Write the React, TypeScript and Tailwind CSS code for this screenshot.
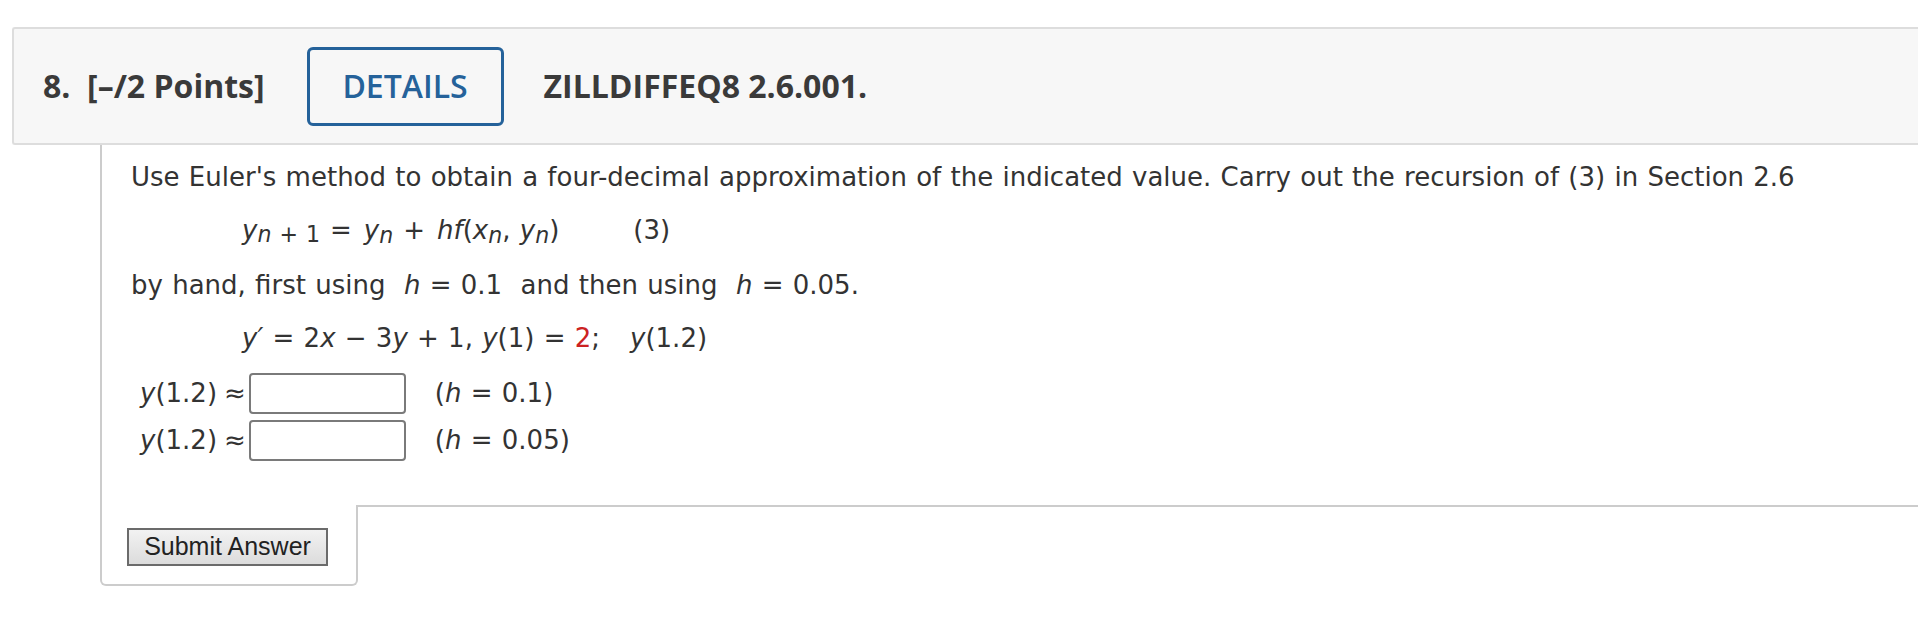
import React from 'react';

const body = { fontFamily: '"DejaVu Sans", Verdana, sans-serif' };
const head = { fontFamily: '"Open Sans", sans-serif' };

const I = ({ children }: { children: React.ReactNode }) => <i className="italic">{children}</i>;
const Sub = ({ children }: { children: React.ReactNode }) => (
  <sub className="text-[0.85em] relative top-[0.2em] align-baseline">{children}</sub>
);

const AnswerRow = ({ step }: { step: string }) => (
  <div className="flex items-center h-[41px]">
    <span className="pl-[9px] whitespace-nowrap">
      <I>y</I>(1.2)<span className="ml-[7px]">≈</span>
    </span>
    <input
      type="text"
      className="ml-[3px] w-[157px] h-[41px] border-2 border-[#7a7a7a] rounded-[4px] bg-white outline-none"
    />
    <span className="ml-[29px] whitespace-nowrap">
      (<I>h</I> = {step})
    </span>
  </div>
);

export default function App() {
  return (
    <div className="w-[1918px] h-[622px] bg-white overflow-hidden pt-[27px] text-[#333333]">
      {/* question header */}
      <div
        className="ml-[12px] h-[118px] border-2 border-r-0 border-[#dddddd] rounded-l-[3px] bg-[#f7f7f7] flex items-center pl-[29px]"
        style={head}
      >
        <span className="text-[32px] font-bold text-[#3a3a3a] whitespace-nowrap">8.&nbsp; [–/2 Points]</span>
        <button className="ml-[42px] w-[197px] h-[79px] border-[3px] border-[#25629a] rounded-[6px] text-[32px] font-semibold text-[#25629a]">
          DETAILS
        </button>
        <span className="ml-[40px] text-[32px] font-bold text-[#3a3a3a] whitespace-nowrap">ZILLDIFFEQ8 2.6.001.</span>
      </div>

      {/* question body */}
      <div className="ml-[100px] text-[26px] [word-spacing:1px]" style={body}>
        <div className="border-l-2 border-[#cccccc] pl-[29px] pt-[6px] pb-[44px]">
          <div className="h-[52px] flex items-center whitespace-nowrap">
            Use Euler's method to obtain a four-decimal approximation of the indicated value. Carry out the recursion of (3) in Section 2.6
          </div>
          <div className="h-[54px] flex items-center pl-[111px] whitespace-pre">
            <I>y</I>
            <Sub>
              <I>n</I>
              {' + 1'}
            </Sub>
            <span className="ml-[10px]">=</span>
            <span className="ml-[12px]">
              <I>y</I>
              <Sub>
                <I>n</I>
              </Sub>
            </span>
            <span className="ml-[10px]">+</span>
            <span className="ml-[12px]">
              <I>hf</I>(<I>x</I>
              <Sub>
                <I>n</I>
              </Sub>
              {', '}
              <I>y</I>
              <Sub>
                <I>n</I>
              </Sub>
              )
            </span>
            <span className="ml-[74px]">(3)</span>
          </div>
          <div className="h-[56px] flex items-center whitespace-nowrap">
            by hand, first using&nbsp;&nbsp;<I>h</I>&nbsp;=&nbsp;0.1&nbsp;&nbsp;and then using&nbsp;&nbsp;<I>h</I>&nbsp;=&nbsp;0.05.
          </div>
          <div className="h-[50px] flex items-center pl-[111px] whitespace-pre [word-spacing:1px]">
            <I>y</I>
            <I>′</I>
            {' = 2'}
            <I>x</I>
            {' − 3'}
            <I>y</I>
            {' + 1, '}
            <I>y</I>
            {'(1) = '}
            <span className="text-[#cc2222]">2</span>
            {';'}
            <span className="ml-[30px]">
              <I>y</I>(1.2)
            </span>
          </div>
          <div className="mt-[10px] flex flex-col gap-[6px]">
            <AnswerRow step="0.1" />
            <AnswerRow step="0.05" />
          </div>
        </div>

        {/* submit area */}
        <div className="flex">
          <div className="w-[258px] h-[81px] border-2 border-t-0 border-[#cccccc] rounded-b-[6px] pl-[25px] pt-[22px]">
            <button
              className="w-[201px] h-[38px] border-2 border-[#6b6b6b] bg-gradient-to-b from-[#f2f2f2] to-[#dcdcdc] text-[25px] leading-none text-[#222222] [word-spacing:0px]"
              style={{ fontFamily: '"Liberation Sans", Arial, sans-serif' }}
            >
              Submit Answer
            </button>
          </div>
          <div className="flex-1 border-t-2 border-[#cccccc] -ml-[2px]" />
        </div>
      </div>
    </div>
  );
}
